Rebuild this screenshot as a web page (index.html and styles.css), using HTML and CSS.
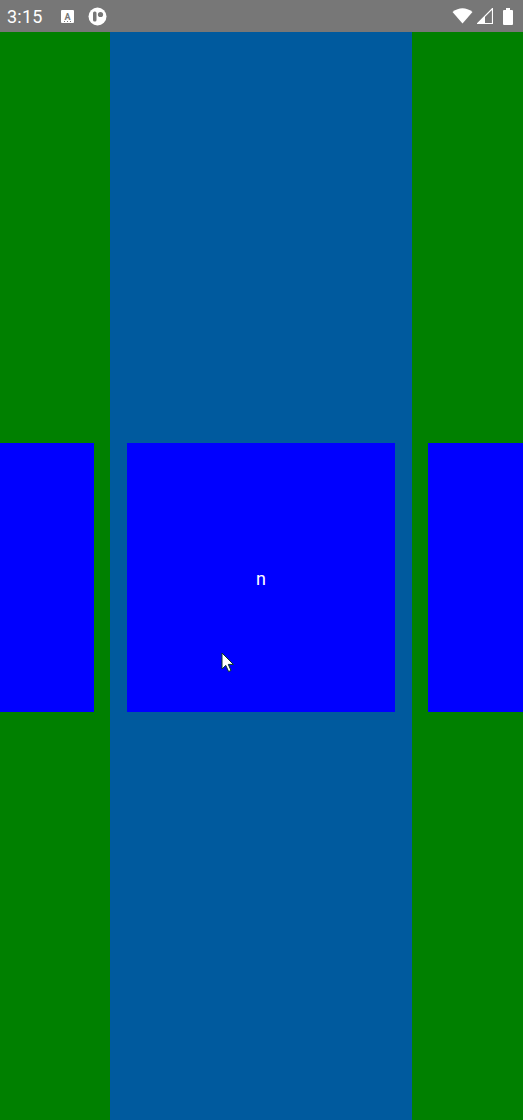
FILE: index.html
```html
<!DOCTYPE html>
<html>
<head>
<meta charset="utf-8">
<link rel="stylesheet" href="styles.css">
</head>
<body>
<div class="status">
  <div class="status-left">
    <span class="time">3:15</span>
    <svg class="ic-a" width="13" height="13" viewBox="0 0 13 13"><rect x="0" y="0" width="13" height="13" rx="1" fill="#fff"/><text x="6.5" y="9.5" text-anchor="middle" font-family="Roboto, sans-serif" font-size="9" font-weight="bold" fill="#777">A</text><rect x="3" y="11" width="1" height="1" fill="#777"/><rect x="6" y="11" width="1" height="1" fill="#777"/><rect x="9" y="11" width="1" height="1" fill="#777"/></svg>
    <svg class="ic-p" width="19" height="19" viewBox="0 0 19 19"><circle cx="9.5" cy="9.5" r="9" fill="#fff"/><rect x="5" y="4.5" width="3.5" height="10" rx="1.5" fill="#777"/><circle cx="12.5" cy="7.5" r="2.6" fill="#777"/></svg>
  </div>
  <div class="status-right">
    <svg width="21" height="16" viewBox="0 0 21 16"><path d="M10.5 15.5 L0.5 4 Q10.5 -3.5 20.5 4 Z" fill="#fff"/></svg>
    <svg width="16" height="16" viewBox="0 0 16 16"><path d="M15.5 0.5 V15.5 H0.5 Z" fill="none" stroke="#fff" stroke-width="1.2"/><path d="M8 8 V15.5 H0.5 Z" fill="#fff"/></svg>
    <svg class="batt" width="10" height="17" viewBox="0 0 10 17"><rect x="3" y="0" width="4" height="2" fill="#fff"/><rect x="0" y="2" width="10" height="15" rx="1" fill="#fff"/></svg>
  </div>
</div>
<div class="main">
  <div class="col side"></div>
  <div class="col middle"></div>
  <div class="col side"></div>
  <div class="carousel">
    <div class="box"></div>
    <div class="box"><span class="label">n</span></div>
    <div class="box"></div>
  </div>
  <svg class="cursor" width="14" height="21" viewBox="0 0 14 21"><path d="M1 1 V17 L4.8 13.4 L7.6 19.6 L10 18.5 L7.3 12.4 L12.4 12.4 Z" fill="#fff" stroke="#0a3a2a" stroke-width="1"/></svg>
</div>
</body>
</html>
```
FILE: styles.css
```css
html, body {
  margin: 0;
  padding: 0;
  width: 523px;
  height: 1120px;
  overflow: hidden;
  font-family: Roboto, "Noto Sans", sans-serif;
}
.status {
  height: 32px;
  background: #777777;
  display: flex;
  align-items: center;
  justify-content: space-between;
  padding: 0 10px 0 7px;
  box-sizing: border-box;
  color: #fff;
}
.status-left {
  display: flex;
  align-items: center;
}
.time {
  font-size: 18px;
  letter-spacing: 0.2px;
  margin-right: 18px;
}
.ic-a {
  margin-right: 14px;
}
.status-right {
  display: flex;
  align-items: center;
  gap: 4px;
}
.batt {
  margin-left: 6px;
}
.main {
  position: relative;
  height: 1088px;
  display: grid;
  grid-template-columns: 110px 302px 111px;
  overflow: hidden;
}
.side {
  background: #008000;
}
.middle {
  background: #005a9e;
}
.carousel {
  position: absolute;
  left: 0;
  right: 0;
  top: 411px;
  padding-right: 1px;
  display: flex;
  justify-content: center;
  gap: 33px;
  overflow: hidden;
}
.box {
  flex: 0 0 268px;
  height: 269px;
  background: #0000ff;
  display: flex;
  align-items: center;
  justify-content: center;
}
.label {
  color: #fff;
  font-size: 18px;
  padding-top: 1px;
}
.cursor {
  position: absolute;
  left: 221px;
  top: 620px;
}
```
